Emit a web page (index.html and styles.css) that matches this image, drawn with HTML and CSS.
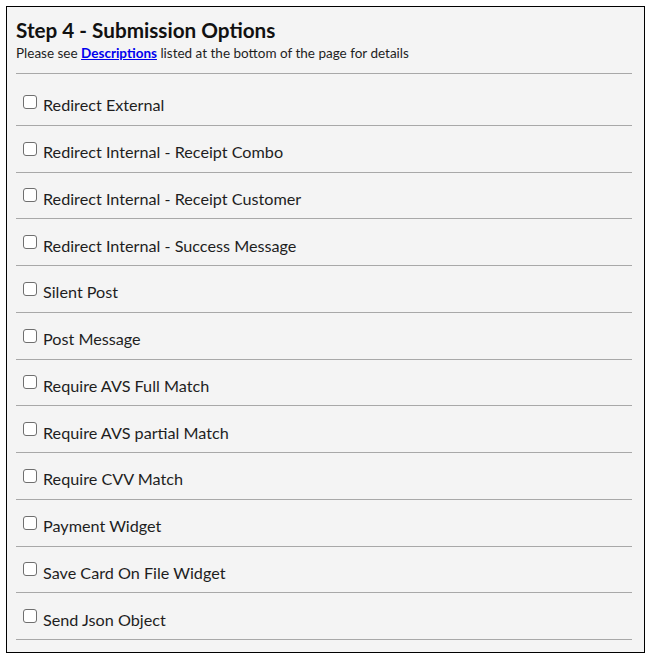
FILE: index.html
```html
<!DOCTYPE html>
<html>
<head>
<meta charset="utf-8">
<link rel="stylesheet" href="styles.css">
</head>
<body>
<div class="panel">
  <h2 class="title">Step 4 - Submission Options</h2>
  <p class="note">Please see <a href="#" class="link">Descriptions</a> listed at the bottom of the page for details</p>
  <ul class="options">
    <li class="option"><label class="opt-label"><input type="checkbox" class="box"><span>Redirect External</span></label></li>
    <li class="option"><label class="opt-label"><input type="checkbox" class="box"><span>Redirect Internal - Receipt Combo</span></label></li>
    <li class="option"><label class="opt-label"><input type="checkbox" class="box"><span>Redirect Internal - Receipt Customer</span></label></li>
    <li class="option"><label class="opt-label"><input type="checkbox" class="box"><span>Redirect Internal - Success Message</span></label></li>
    <li class="option"><label class="opt-label"><input type="checkbox" class="box"><span>Silent Post</span></label></li>
    <li class="option"><label class="opt-label"><input type="checkbox" class="box"><span>Post Message</span></label></li>
    <li class="option"><label class="opt-label"><input type="checkbox" class="box"><span>Require AVS Full Match</span></label></li>
    <li class="option"><label class="opt-label"><input type="checkbox" class="box"><span>Require AVS partial Match</span></label></li>
    <li class="option"><label class="opt-label"><input type="checkbox" class="box"><span>Require CVV Match</span></label></li>
    <li class="option"><label class="opt-label"><input type="checkbox" class="box"><span>Payment Widget</span></label></li>
    <li class="option"><label class="opt-label"><input type="checkbox" class="box"><span>Save Card On File Widget</span></label></li>
    <li class="option"><label class="opt-label"><input type="checkbox" class="box"><span>Send Json Object</span></label></li>
  </ul>
</div>
</body>
</html>
```
FILE: styles.css
```css
html, body {
  margin: 0;
  padding: 0;
  background: #ffffff;
}
body {
  font-family: Lato, "Noto Sans", sans-serif;
  color: #1e1e1e;
}
.panel {
  margin: 6px 0 0 6px;
  width: 639px;
  height: 647px;
  box-sizing: border-box;
  border: 1px solid #000;
  background: #f4f4f4;
  padding: 11px 12px 0 9px;
}
.title {
  margin: 0;
  font-size: 20.7px;
  line-height: 25px;
  font-weight: 700;
  color: #111;
}
.note {
  margin: 2px 0 0 0;
  font-size: 13.5px;
  line-height: 17px;
  padding-bottom: 11px;
  border-bottom: 1px solid #a8a8a8;
}
.link {
  color: #0000ee;
  font-weight: 700;
  text-decoration: underline;
}
.options {
  list-style: none;
  margin: 0;
  padding: 5px 0 0 0;
}
.option {
  height: 46.75px;
  box-sizing: border-box;
  border-bottom: 1px solid #a8a8a8;
  display: flex;
  align-items: center;
  padding-top: 7px;
}
.opt-label {
  display: flex;
  align-items: center;
  font-size: 16.2px;
  line-height: 20px;
}
.box {
  appearance: none;
  -webkit-appearance: none;
  width: 14px;
  height: 14px;
  margin: 0 6px 0 7px;
  border: 1px solid #6f6f6f;
  border-radius: 3px;
  background: #fff;
  box-sizing: border-box;
  position: relative;
  top: -3.5px;
}
```
